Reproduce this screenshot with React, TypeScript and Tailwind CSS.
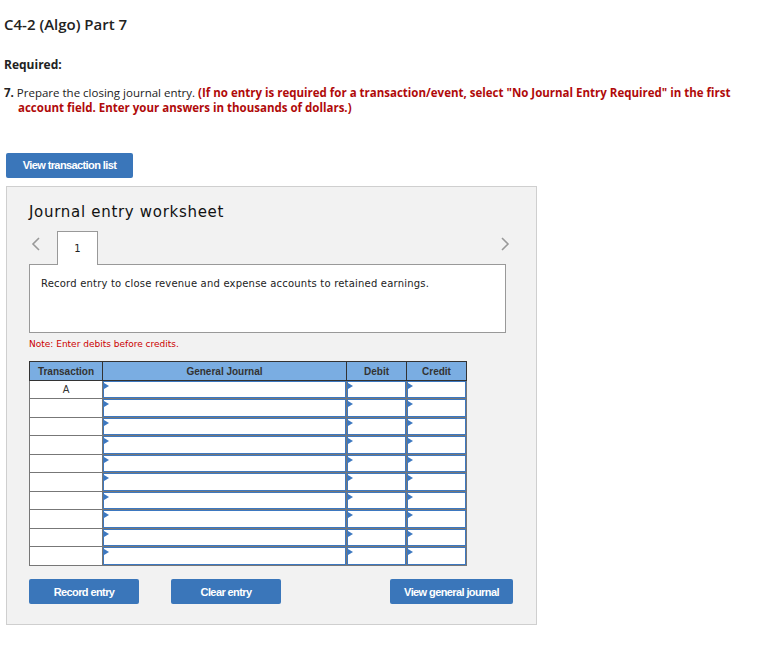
import React from 'react';

const top = { fontFamily: '"Open Sans", Lato, sans-serif' };
const verd = { fontFamily: '"DejaVu Sans", Verdana, "Open Sans", sans-serif' };

function Btn({ label, className = '' }: { label: string; className?: string }) {
  return (
    <button
      className={`h-[25px] shrink-0 rounded-[2px] bg-[#3a76ba] text-[11px] font-bold tracking-[-0.6px] text-white ${className}`}
      style={{ fontFamily: '"Liberation Sans", Arial, sans-serif' }}
    >
      {label}
    </button>
  );
}

function InputCell({ tall }: { tall: boolean }) {
  return (
    <td className="border border-[#777] p-0">
      <div className={`relative border border-[#3d78c0] bg-white ${tall ? 'h-[18px]' : 'h-[17px]'}`}>
        <span className="absolute left-0 top-[1px] h-0 w-0 border-y-[3px] border-l-[5px] border-y-transparent border-l-[#3d78c0]" />
      </div>
    </td>
  );
}

export default function App() {
  const rows = Array.from({ length: 10 }, (_, i) => i);
  const tallRows = [1, 3, 5, 7, 9];
  return (
    <div className="min-h-[651px] w-[762px] bg-white pb-6" style={top}>
      <div className="px-1 pt-[14px]">
        <h1 className="text-[15px] font-semibold leading-[20px] text-[#222]">C4-2 (Algo) Part 7</h1>
        <p className="mt-[23px] text-[12px] font-bold leading-[16px] text-[#222]">Required:</p>
        <p className="mt-[12px] whitespace-nowrap text-[11.5px] leading-[15px] text-[#222]">
          <span className="font-bold">7.</span> Prepare the closing journal entry.{' '}
          <span className="font-bold text-[#b00a0a]">
            (If no entry is required for a transaction/event, select "No Journal Entry Required" in the first
            <br />
            <span className="pl-[14px]">account field. Enter your answers in thousands of dollars.)</span>
          </span>
        </p>
      </div>

      <div className="mt-[36px] px-[6px]">
        <Btn label="View transaction list" className="w-[127px]" />
      </div>

      <div className="mx-[6px] mt-[8px] w-[531px] border border-[#cfcfcf] bg-[#f2f2f2] pb-[20px] pl-[22px] pr-[30px] pt-[15px]">
        <h2 className="text-[15px] font-medium leading-[20px] tracking-[0.7px] text-[#111]" style={verd}>
          Journal entry worksheet
        </h2>

        <div className="mt-[9px] flex items-end" style={verd}>
          <span className="mb-[13px] w-[28px] pl-[2px]">
            <svg width="10" height="14" viewBox="0 0 10 14" fill="none" stroke="#999" strokeWidth="1.6">
              <path d="M8 1 L2 7 L8 13" />
            </svg>
          </span>
          <div className="relative z-10 -mb-px flex h-[34px] w-[41px] items-center justify-center border border-b-0 border-[#999] bg-white text-[10px] text-[#222]">
            1
          </div>
          <span className="mb-[13px] ml-auto mr-[-4px]">
            <svg width="10" height="14" viewBox="0 0 10 14" fill="none" stroke="#999" strokeWidth="1.6">
              <path d="M2 1 L8 7 L2 13" />
            </svg>
          </span>
        </div>
        <div
          className="h-[69px] w-[477px] border border-[#999] bg-white px-[11px] pt-[11px] text-[10px] tracking-[0.2px] text-[#222]"
          style={verd}
        >
          Record entry to close revenue and expense accounts to retained earnings.
        </div>
        <p className="mt-[5px] text-[9px] text-[#c00]" style={verd}>
          Note: Enter debits before credits.
        </p>

        <table
          className="mt-[10px] w-[438px] border-collapse text-[10px]"
          style={{ fontFamily: '"Liberation Sans", Arial, sans-serif' }}
        >
          <thead>
            <tr className="h-[19px] bg-[#7aade2] font-bold text-[#333]">
              <th className="w-[73px] border border-[#333] font-bold">Transaction</th>
              <th className="w-[244px] border border-[#333] font-bold">General Journal</th>
              <th className="w-[60px] border border-[#333] font-bold">Debit</th>
              <th className="w-[60px] border border-[#333] font-bold">Credit</th>
            </tr>
          </thead>
          <tbody>
            {rows.map((i) => {
              const tall = tallRows.includes(i);
              return (
                <tr key={i}>
                  <td className="border border-[#777] bg-white p-0 text-center text-[#333]">{i === 0 ? 'A' : ''}</td>
                  <InputCell tall={tall} />
                  <InputCell tall={tall} />
                  <InputCell tall={tall} />
                </tr>
              );
            })}
          </tbody>
        </table>

        <div className="mt-[13px] flex items-center">
          <Btn label="Record entry" className="w-[110px]" />
          <Btn label="Clear entry" className="ml-[32px] w-[110px]" />
          <Btn label="View general journal" className="ml-[109px] w-[123px]" />
        </div>
      </div>
    </div>
  );
}
